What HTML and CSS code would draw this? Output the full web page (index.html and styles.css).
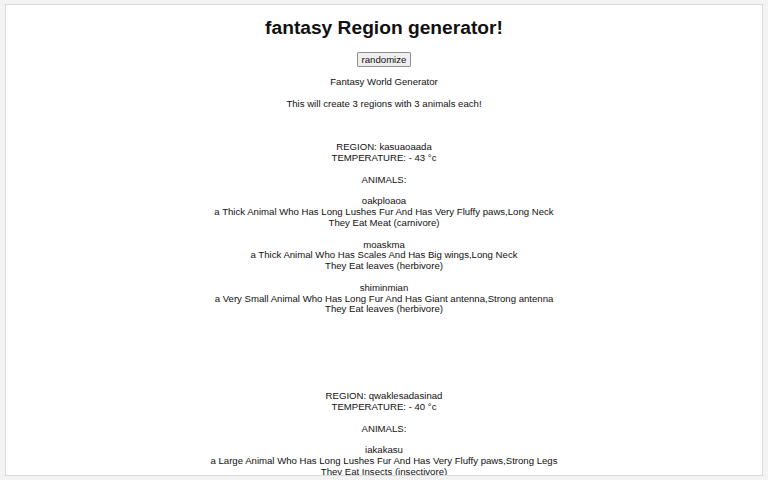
FILE: index.html
```html
<!DOCTYPE html>
<html lang="en">
<head>
  <meta charset="UTF-8">
  <meta name="viewport" content="width=device-width, initial-scale=1.0">
  <title>fantasy Region generator!</title>
  <link rel="stylesheet" href="styles.css">
</head>
<body>
<div class="page">
  <h1>fantasy Region generator!</h1>
  <p class="controls"><button class="btn">randomize</button></p>
  <p>Fantasy World Generator</p>
  <p>This will create 3 regions with 3 animals each!</p>

  <div class="region">
    <p>REGION: kasuaoaada<br>TEMPERATURE: - 43 °c</p>
    <p>ANIMALS:</p>
    <p>oakploaoa<br>a Thick Animal Who Has Long Lushes Fur And Has Very Fluffy paws,Long Neck<br>They Eat Meat (carnivore)</p>
    <p>moaskma<br>a Thick Animal Who Has Scales And Has Big wings,Long Neck<br>They Eat leaves (herbivore)</p>
    <p>shiminmian<br>a Very Small Animal Who Has Long Fur And Has Giant antenna,Strong antenna<br>They Eat leaves (herbivore)</p>
  </div>

  <div class="region">
    <p>REGION: qwaklesadasinad<br>TEMPERATURE: - 40 °c</p>
    <p>ANIMALS:</p>
    <p>iakakasu<br>a Large Animal Who Has Long Lushes Fur And Has Very Fluffy paws,Strong Legs<br>They Eat Insects (insectivore)</p>
  </div>
</div>
</body>
</html>
```

FILE: styles.css
```css
* {
  box-sizing: border-box;
}
body {
  margin: 0;
  padding: 4px 5px;
  height: 100vh;
  overflow: hidden;
  background-color: #f3f3f3;
  font-family: "Liberation Sans", Arial, sans-serif;
  font-size: 9.6px;
  line-height: 10.8px;
  color: #111;
}
.page {
  height: 472px;
  overflow: hidden;
  background-color: #fff;
  border: 1px solid #dcdcdc;
  text-align: center;
  padding-top: 1px;
}
h1 {
  font-size: 19.2px;
  line-height: 22px;
  margin: 11px 0 13px;
}
p {
  margin: 0 0 10.8px;
}
.controls {
  margin: 0 0 10px;
  line-height: 0;
}
.btn {
  font-family: inherit;
  font-size: 9.6px;
  line-height: 11px;
  padding: 1px 4px;
  background-color: #efefef;
  border: 1px solid #8f8f8f;
  border-radius: 1px;
  color: #111;
}
.region {
  margin-top: 33px;
}
.region + .region {
  margin-top: 76px;
}
```
